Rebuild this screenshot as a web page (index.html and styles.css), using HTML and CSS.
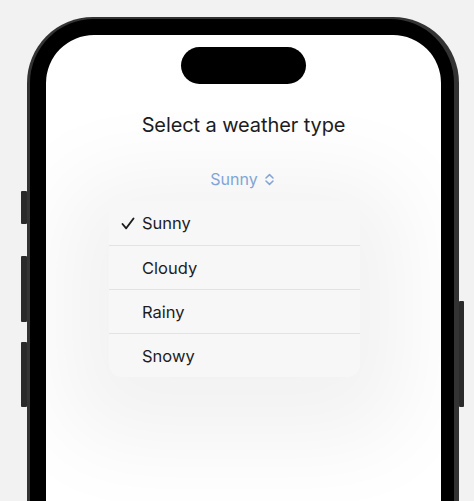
FILE: index.html
```html
<!DOCTYPE html>
<html>
<head>
<meta charset="utf-8">
<link rel="stylesheet" href="styles.css">
</head>
<body>
<div class="stage">
  <div class="phone">
    <span class="btn btn-action"></span>
    <span class="btn btn-vol-up"></span>
    <span class="btn btn-vol-down"></span>
    <span class="btn btn-power"></span>
    <div class="bezel">
      <div class="screen">
        <div class="island"></div>
        <h1 class="title">Select a weather type</h1>
        <div class="picker">
          <span class="picker-label">Sunny</span>
          <svg class="chev" width="11" height="13" viewBox="0 0 11 13" fill="none" stroke="currentColor" stroke-width="1.5" stroke-linecap="round" stroke-linejoin="round"><path d="M2 5 L5.5 1.6 L9 5"/><path d="M2 8 L5.5 11.4 L9 8"/></svg>
        </div>
        <ul class="menu">
          <li class="item"><svg class="check" width="14" height="13" viewBox="0 0 14 13" fill="none" stroke="currentColor" stroke-width="1.9" stroke-linecap="round" stroke-linejoin="round"><path d="M1.5 7 L5.2 11.3 L12.5 1.5"/></svg><span>Sunny</span></li>
          <li class="item"><span>Cloudy</span></li>
          <li class="item"><span>Rainy</span></li>
          <li class="item"><span>Snowy</span></li>
        </ul>
      </div>
    </div>
  </div>
</div>
</body>
</html>
```

FILE: styles.css
```css
* { box-sizing: border-box; }
html, body {
  margin: 0;
  padding: 0;
  width: 474px;
  height: 501px;
  overflow: hidden;
  background: #f2f2f2;
  font-family: "Inter", "Noto Sans", sans-serif;
}
.stage {
  padding: 17px 0 0 27px;
}
.phone {
  position: relative;
  width: 432px;
  height: 560px;
  background: #333;
  border-radius: 66px;
  padding: 2px 5px 0 3px;
}
.btn {
  position: absolute;
  background: #2a2a2a;
  border-radius: 1px;
}
.btn-action { left: -6px; top: 174px; width: 6px; height: 33px; }
.btn-vol-up { left: -6px; top: 239px; width: 6px; height: 66px; }
.btn-vol-down { left: -6px; top: 325px; width: 6px; height: 65px; }
.btn-power { right: -5px; top: 284px; width: 5px; height: 106px; }
.bezel {
  height: 100%;
  background: #000;
  border-radius: 64px;
  padding: 16px 13px 0 16px;
}
.screen {
  height: 100%;
  background: #fff;
  border-radius: 48px;
  display: flex;
  flex-direction: column;
  align-items: center;
  overflow: hidden;
}
.island {
  margin-top: 12px;
  width: 125px;
  height: 37px;
  border-radius: 19px;
  background: #000;
  flex: none;
}
.title {
  margin: 28px 0 0;
  font-size: 20px;
  line-height: 26px;
  font-weight: 400;
  color: #1d1d1f;
  letter-spacing: -0.1px;
}
.picker {
  margin-top: 30px;
  display: flex;
  align-items: center;
  gap: 6px;
  color: #86aadb;
  height: 22px;
  margin-right: 2px;
}
.picker-label {
  font-size: 16px;
  line-height: 22px;
}
.chev { display: block; }
.menu {
  list-style: none;
  margin: 11px 18px 0 0;
  padding: 0;
  width: 251px;
  background: #f7f7f7;
  border-radius: 13px;
  box-shadow: 0 20px 90px 45px rgba(0, 0, 0, 0.055);
  flex: none;
}
.item {
  height: 44px;
  display: flex;
  align-items: center;
  padding-left: 33px;
  font-size: 16.5px;
  color: #1d1d1f;
  position: relative;
}
.item + .item { border-top: 1px solid #e3e3e3; }
.check {
  position: absolute;
  left: 12px;
  top: 16px;
  color: #1d1d1f;
}
```
